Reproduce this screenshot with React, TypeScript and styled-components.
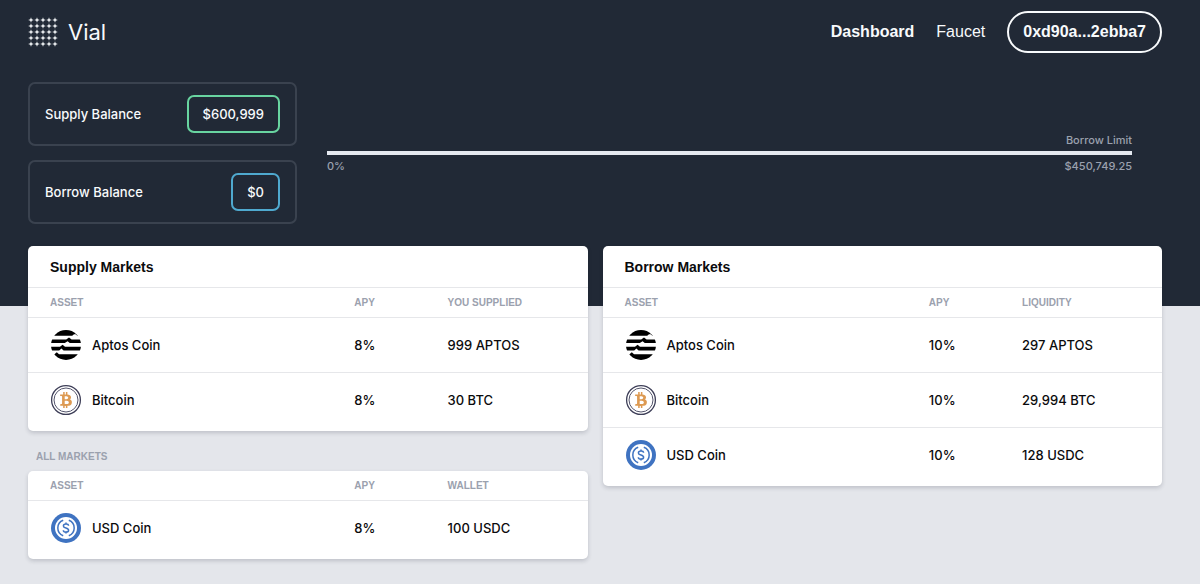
import React from "react";
import styled, { createGlobalStyle } from "styled-components";
import { FaBtc } from "react-icons/fa";

const color = {
  ink: "#212936",
  page: "#e4e6eb",
  outline: "#3a424f",
  line: "#e6e7ea",
  muted: "#9ba1ae",
  white: "#f8fafc",
  green: "#68d4a0",
  blue: "#4fa9cf",
};

const displayFont = `"Liberation Sans", Arial, sans-serif`;

const GlobalStyle = createGlobalStyle`
  *, *::before, *::after { box-sizing: border-box; }
  body {
    margin: 0;
    background: ${color.page};
    color: #0b0b0d;
    font-family: Inter, "Liberation Sans", sans-serif;
    font-size: 13px;
    line-height: 20px;
    font-weight: 500;
  }
`;

const Hero = styled.header`
  background: ${color.ink};
  color: ${color.white};
  padding: 0 38px 82px 28px;
`;

const TopBar = styled.div`
  display: flex;
  align-items: center;
  justify-content: space-between;
  height: 64px;
`;

const Brand = styled.a`
  display: flex;
  align-items: center;
  gap: 10px;
  color: inherit;
  text-decoration: none;
  font-size: 22px;
  font-weight: 400;
  line-height: 30px;
`;

const Nav = styled.nav`
  display: flex;
  align-items: center;
  gap: 22px;
`;

const NavLink = styled.a<{ $active?: boolean }>`
  color: inherit;
  text-decoration: none;
  font-family: ${displayFont};
  font-size: 16px;
  font-weight: ${(p) => (p.$active ? 700 : 400)};
`;

const AccountButton = styled.button`
  height: 42px;
  padding: 0 14px;
  border: 2px solid ${color.white};
  border-radius: 21px;
  background: transparent;
  color: inherit;
  font-family: ${displayFont};
  font-size: 16px;
  font-weight: 700;
`;

const Summary = styled.section`
  display: flex;
  align-items: center;
  gap: 30px;
  padding-top: 18px;
`;

const Balances = styled.div`
  display: flex;
  flex: 0 0 269px;
  flex-direction: column;
  gap: 14px;
`;

const BalanceCard = styled.div`
  display: flex;
  align-items: center;
  justify-content: space-between;
  height: 64px;
  padding: 0 15px;
  border: 2px solid ${color.outline};
  border-radius: 7px;
`;

const Amount = styled.span<{ $tone: string }>`
  padding: 7px 14px;
  border: 2px solid ${(p) => p.$tone};
  border-radius: 7px;
  line-height: 20px;
`;

const Limit = styled.div`
  flex: 1;
  margin-right: 30px;
  color: ${color.muted};
  font-size: 11px;
  line-height: 14px;
`;

const LimitLabel = styled.div`
  text-align: right;
`;

const Track = styled.div`
  height: 4px;
  margin: 4px 0;
  background: #e5e9f0;
`;

const LimitScale = styled.div`
  display: flex;
  justify-content: space-between;
`;

const Markets = styled.main`
  display: grid;
  grid-template-columns: 1fr 1fr;
  align-items: start;
  gap: 15px;
  margin-top: -60px;
  padding: 0 38px 25px 28px;
`;

const Card = styled.section`
  padding-bottom: 2px;
  border-radius: 5px;
  background: #fff;
  box-shadow: 0 2px 4px rgba(20, 28, 45, 0.18);
`;

const CardTitle = styled.h2`
  margin: 0;
  padding: 11px 22px 10px;
  border-bottom: 1px solid ${color.line};
  font-family: ${displayFont};
  font-size: 14px;
  font-weight: 700;
  line-height: 20px;
`;

const GroupLabel = styled.h2`
  margin: 16px 0 4px;
  padding-left: 8px;
  color: ${color.muted};
  font-family: ${displayFont};
  font-size: 10px;
  font-weight: 700;
  line-height: 20px;
  text-transform: uppercase;
`;

const Table = styled.table`
  width: 100%;
  border-collapse: separate;
  border-spacing: 0;
  table-layout: fixed;
`;

const HeadCell = styled.th`
  height: 30px;
  padding: 0;
  border-bottom: 1px solid ${color.line};
  color: ${color.muted};
  font-family: ${displayFont};
  font-size: 10px;
  font-weight: 700;
  line-height: 12px;
  text-align: left;
  text-transform: uppercase;

  &:first-child { width: 58.33%; padding-left: 22px; }
  &:nth-child(2) { width: 16.67%; }
`;

const Cell = styled.td`
  height: 55px;
  padding: 0;
  border-bottom: 1px solid ${color.line};

  &:first-child { padding-left: 22px; }
  tr:last-child > & { height: 56px; padding-bottom: 1px; border-bottom-color: transparent; }
`;

const Asset = styled.div`
  display: flex;
  align-items: center;
  gap: 10px;

  svg { display: block; flex: none; }
`;

const LogoMark = () => (
  <svg width="30" height="30" viewBox="0 0 30 30" aria-hidden="true">
    {[3, 9, 15, 21, 27].flatMap((y) =>
      [3, 9, 15, 21, 27].map((x) => (
        <path
          key={`${x}-${y}`}
          d={`M${x} ${y - 2.8}L${x + 0.7} ${y - 0.7}L${x + 2.8} ${y}L${x + 0.7} ${y + 0.7}L${x} ${y + 2.8}L${x - 0.7} ${y + 0.7}L${x - 2.8} ${y}L${x - 0.7} ${y - 0.7}Z`}
          fill="#f8fafc"
        />
      ))
    )}
  </svg>
);

const AptosIcon = () => (
  <svg width="32" height="32" viewBox="-1 -1 32 32" aria-hidden="true">
    <clipPath id="aptos-disc">
      <circle cx="15" cy="15" r="15" />
    </clipPath>
    <g clipPath="url(#aptos-disc)" fill="#000">
      <path d="M0 0H30V5.8H26.4L24.6 4.2L23 4.2L21.2 5.8H0Z" />
      <path d="M0 9.4H15.2L18 7.4L20.6 9.4H30V13.1H18.8L16.6 11.2L13.8 13.1H0Z" />
      <path d="M0 16.8H9L11.6 14.8L14 16.8H30V20.4H12.6L10.4 18.6L8.2 20.4H0Z" />
      <path d="M0 24.2H3.5L5.8 22.2L8 24.2H30V30H0Z" />
    </g>
  </svg>
);

const BitcoinIcon = () => (
  <svg width="32" height="32" viewBox="0 0 32 32" aria-hidden="true">
    <circle cx="16" cy="16" r="14.4" fill="#fff" stroke="#3e3f58" strokeWidth="1.3" />
    <circle cx="16" cy="16" r="12" fill="none" stroke="#55566d" strokeWidth="1" />
    <FaBtc x={8} y={8} size={16} color="#dd9a52" />
  </svg>
);

const UsdIcon = () => (
  <svg width="32" height="32" viewBox="0 0 32 32" fill="none" aria-hidden="true">
    <circle cx="16" cy="16" r="15" fill="#3f73c1" />
    <circle cx="16" cy="16" r="11" fill="#fff" />
    <g stroke="#3f73c1" strokeWidth="1.5">
      <path d="M13.2 8.3A8.2 8.2 0 0 0 13.2 23.7" />
      <path d="M18.8 8.3A8.2 8.2 0 0 1 18.8 23.7" />
      <path d="M18.6 13.8C18.5 12.5 17.4 12 16 12S13.4 12.6 13.4 13.9C13.4 16.8 18.6 15.1 18.6 18.2C18.6 19.5 17.4 20.1 16 20.1S13.4 19.5 13.3 18.2M16 10.4V12M16 20V21.6" />
    </g>
  </svg>
);

const assets = {
  aptos: { name: "Aptos Coin", Icon: AptosIcon },
  btc: { name: "Bitcoin", Icon: BitcoinIcon },
  usdc: { name: "USD Coin", Icon: UsdIcon },
};

type Market = { asset: keyof typeof assets; apy: string; amount: string };

const supplied: Market[] = [
  { asset: "aptos", apy: "8%", amount: "999 APTOS" },
  { asset: "btc", apy: "8%", amount: "30 BTC" },
];
const available: Market[] = [{ asset: "usdc", apy: "8%", amount: "100 USDC" }];
const borrowable: Market[] = [
  { asset: "aptos", apy: "10%", amount: "297 APTOS" },
  { asset: "btc", apy: "10%", amount: "29,994 BTC" },
  { asset: "usdc", apy: "10%", amount: "128 USDC" },
];

const MarketTable = ({ label, amountLabel, rows }: { label: string; amountLabel: string; rows: Market[] }) => (
  <Table aria-label={label}>
    <thead>
      <tr>
        <HeadCell scope="col">Asset</HeadCell>
        <HeadCell scope="col">APY</HeadCell>
        <HeadCell scope="col">{amountLabel}</HeadCell>
      </tr>
    </thead>
    <tbody>
      {rows.map(({ asset, apy, amount }) => {
        const { name, Icon } = assets[asset];
        return (
          <tr key={asset}>
            <Cell>
              <Asset>
                <Icon />
                {name}
              </Asset>
            </Cell>
            <Cell>{apy}</Cell>
            <Cell>{amount}</Cell>
          </tr>
        );
      })}
    </tbody>
  </Table>
);

export default function App() {
  return (
    <>
      <GlobalStyle />
      <Hero>
        <TopBar>
          <Brand href="#">
            <LogoMark />
            Vial
          </Brand>
          <Nav>
            <NavLink href="#dashboard" $active>Dashboard</NavLink>
            <NavLink href="#faucet">Faucet</NavLink>
            <AccountButton type="button">0xd90a...2ebba7</AccountButton>
          </Nav>
        </TopBar>
        <Summary>
          <Balances>
            <BalanceCard>
              Supply Balance
              <Amount $tone={color.green}>$600,999</Amount>
            </BalanceCard>
            <BalanceCard>
              Borrow Balance
              <Amount $tone={color.blue}>$0</Amount>
            </BalanceCard>
          </Balances>
          <Limit>
            <LimitLabel>Borrow Limit</LimitLabel>
            <Track />
            <LimitScale>
              <span>0%</span>
              <span>$450,749.25</span>
            </LimitScale>
          </Limit>
        </Summary>
      </Hero>
      <Markets>
        <div>
          <Card>
            <CardTitle>Supply Markets</CardTitle>
            <MarketTable label="Supply markets" amountLabel="You supplied" rows={supplied} />
          </Card>
          <GroupLabel>All markets</GroupLabel>
          <Card>
            <MarketTable label="All markets" amountLabel="Wallet" rows={available} />
          </Card>
        </div>
        <Card>
          <CardTitle>Borrow Markets</CardTitle>
          <MarketTable label="Borrow markets" amountLabel="Liquidity" rows={borrowable} />
        </Card>
      </Markets>
    </>
  );
}
